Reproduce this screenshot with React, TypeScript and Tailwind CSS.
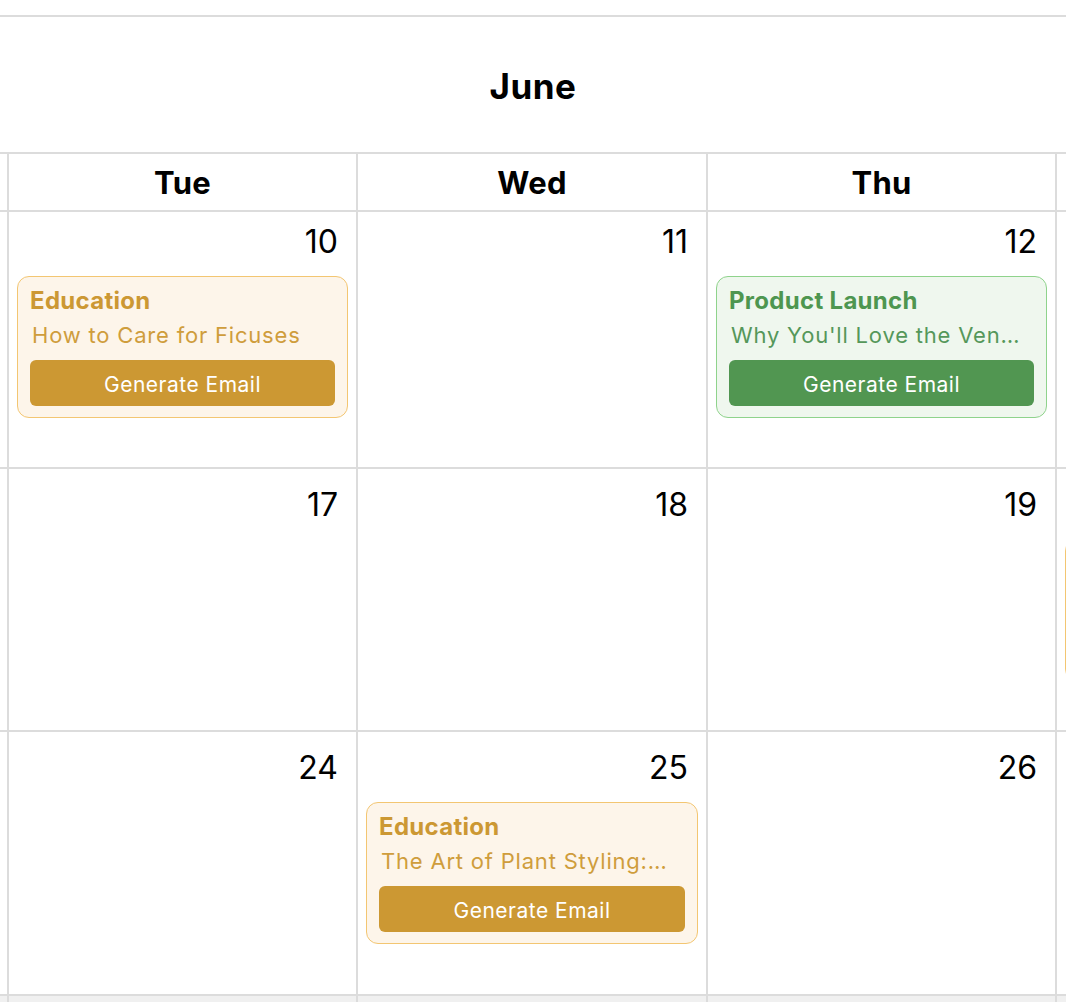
import React from "react";

type Ev = { cat: string; title: string; tone: "gold" | "green" };

const tones = {
  gold: {
    card: "border-[#f3c672] bg-[#fdf5ea]",
    title: "text-[#cc9833]",
    sub: "text-[#cf9d3c]",
    btn: "bg-[#cc9833]",
  },
  green: {
    card: "border-[#8fd38c] bg-[#eff7ee]",
    title: "text-[#4e9650]",
    sub: "text-[#55975a]",
    btn: "bg-[#519651]",
  },
};

function Card({ ev }: { ev: Ev }) {
  const t = tones[ev.tone];
  return (
    <div className={`mx-[8px] mt-[14px] rounded-[12px] border px-[12px] pt-[10px] pb-[11px] ${t.card}`}>
      <div className={`text-[24px] leading-[28px] font-bold tracking-[0.3px] whitespace-nowrap overflow-hidden ${t.title}`}>
        {ev.cat}
      </div>
      <div className={`mt-[6px] pl-[2px] text-[22px] leading-[28px] whitespace-nowrap overflow-hidden tracking-[0.8px] ${t.sub}`}>
        {ev.title}
      </div>
      <div className={`mt-[11px] h-[46px] pt-[3px] rounded-[6px] flex items-center justify-center text-white text-[21px] tracking-[0.5px] ${t.btn}`}>
        Generate Email
      </div>
    </div>
  );
}

function Cell({ day, ev, first, last }: { day?: string; ev?: Ev; first?: boolean; last?: boolean }) {
  return (
    <div className={`${last ? "" : "border-r-2"} border-b-2 border-[#dcdcdc] overflow-hidden`}>
      {day !== undefined && (
        <div className={`${first ? "pt-[10px]" : "pt-[16px]"} pr-[18px] text-right text-[32px] leading-[40px] text-black`}>
          {day}
        </div>
      )}
      {ev && <Card ev={ev} />}
    </div>
  );
}

function EdgeCell({ withCard }: { withCard?: boolean }) {
  return (
    <div className="border-b-2 border-[#dcdcdc] overflow-hidden pt-[16px]">
      <div className="h-[40px]" />
      {withCard && (
        <div className="mx-[8px] mt-[14px] h-[142px] rounded-[12px] border border-[#f3c672] bg-[#fdf5ea]" />
      )}
    </div>
  );
}

export default function App() {
  const rows: { days: (string | undefined)[]; evs: (Ev | undefined)[]; h: string; friCard?: boolean }[] = [
    {
      days: [undefined, "10", "11", "12"],
      evs: [
        undefined,
        { cat: "Education", title: "How to Care for Ficuses", tone: "gold" },
        undefined,
        { cat: "Product Launch", title: "Why You'll Love the Ven…", tone: "green" },
      ],
      h: "h-[257px]",
    },
    {
      days: [undefined, "17", "18", "19"],
      evs: [undefined, undefined, undefined, undefined],
      h: "h-[263px]",
      friCard: true,
    },
    {
      days: [undefined, "24", "25", "26"],
      evs: [undefined, undefined, { cat: "Education", title: "The Art of Plant Styling:…", tone: "gold" }, undefined],
      h: "h-[264px]",
    },
  ];

  const cols = "grid grid-cols-[9px_349px_350px_349px_349px] w-[1406px]";

  return (
    <div
      className="w-full h-[1002px] overflow-hidden bg-white text-black"
      style={{ fontFamily: "Inter, 'Noto Sans', sans-serif" }}
    >
      <div className="pt-[15px]">
        <div className="border-t-2 border-[#dcdcdc] h-[137px] pt-[3px] flex items-center justify-center">
          <h1 className="text-[35px] font-bold leading-none tracking-[0.5px]">June</h1>
        </div>
      </div>
      <div className="border-t-2 border-[#dcdcdc]">
        <div className={`${cols} h-[58px]`}>
          {["", "Tue", "Wed", "Thu", ""].map((d, i) => (
            <div
              key={i}
              className={`${i === 4 ? "" : "border-r-2"} border-b-2 border-[#dcdcdc] flex items-center justify-center pt-[3px] text-[31px] font-bold tracking-[0.3px] overflow-hidden`}
            >
              {d}
            </div>
          ))}
        </div>
        {rows.map((r, ri) => (
          <div key={ri} className={`${cols} ${r.h}`}>
            {r.days.map((d, i) => (
              <Cell key={i} day={i === 0 ? undefined : d} ev={r.evs[i]} first={ri === 0} />
            ))}
            <EdgeCell withCard={r.friCard} />
          </div>
        ))}
        <div className={`${cols} h-[20px] bg-[#f0f0f0]`}>
          {[0, 1, 2, 3, 4].map((i) => (
            <div key={i} className={`${i === 4 ? "" : "border-r-2"} border-[#dcdcdc]`} />
          ))}
        </div>
      </div>
    </div>
  );
}
